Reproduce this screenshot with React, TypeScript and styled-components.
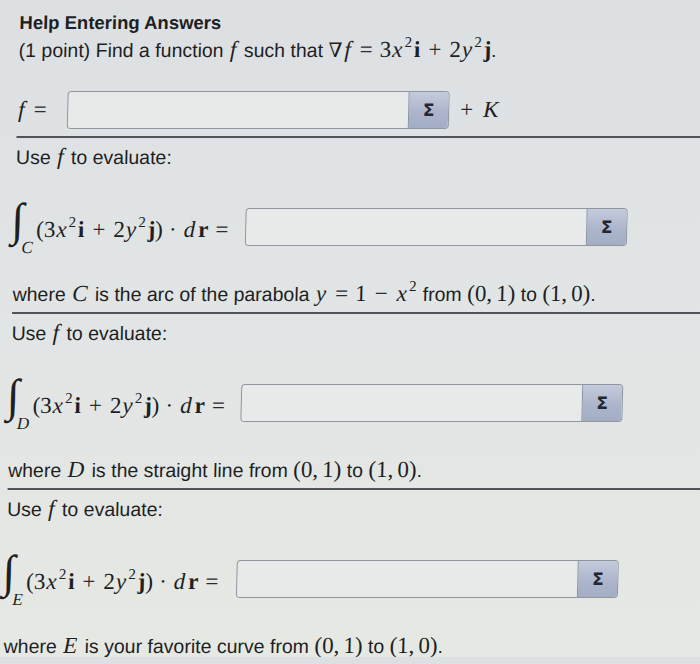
import { createGlobalStyle, styled } from "styled-components";

const GlobalStyle = createGlobalStyle`
  html, body {
    margin: 0;
    padding: 0;
    overflow: hidden;
  }
  body {
    background: linear-gradient(180deg, #dde0e3 0%, #e2e5e5 50%, #e6e8e3 100%);
    color: #1d1f23;
    font-family: "Liberation Sans", Arial, sans-serif;
  }
`;

type TCurve = {
  name: string;
  text: JSX.Element;
};

const getCurves = (): TCurve[] => [
  {
    name: "C",
    text: (
      <>
        is the arc of the parabola{" "}
        <Formula>
          <Var>y</Var>
          <Op $rel>=</Op>
          <Num>1</Num>
          <Op>−</Op>
          <Var>x</Var>
          <Sup>2</Sup>
        </Formula>{" "}
        from <Point a="0" b="1" /> to <Point a="1" b="0" />.
      </>
    ),
  },
  {
    name: "D",
    text: (
      <>
        is the straight line from <Point a="0" b="1" /> to <Point a="1" b="0" />.
      </>
    ),
  },
  {
    name: "E",
    text: (
      <>
        is your favorite curve from <Point a="0" b="1" /> to <Point a="1" b="0" />.
      </>
    ),
  },
];

function Point({ a, b }: { a: string; b: string }) {
  return (
    <Formula>
      (<Num>{a}</Num>,<Num $gap>{b}</Num>)
    </Formula>
  );
}

function Field() {
  return (
    <AnswerField>
      <FieldInput type="text" />
      <SigmaButton type="button">Σ</SigmaButton>
    </AnswerField>
  );
}

function Integrand({ name }: { name: string }) {
  return (
    <IntegralBox>
      <IntegralSign>∫</IntegralSign>
      <IntegralSub>{name}</IntegralSub>
      <IntegralBody>
        (<Num>3</Num>
        <Var>x</Var>
        <Sup>2</Sup>
        <Bold>i</Bold>
        <Op>+</Op>
        <Num>2</Num>
        <Var>y</Var>
        <Sup>2</Sup>
        <Bold>j</Bold>)<Op $dot>·</Op>
        <Var>d</Var>
        <Bold>r</Bold>
        <Op $rel>=</Op>
      </IntegralBody>
    </IntegralBox>
  );
}

export default function App() {
  return (
    <>
      <GlobalStyle />
      <Page>
        <Header>
          <Title>Help Entering Answers</Title>
          <Prompt>
            (1 point) Find a function <Var>f</Var> such that{" "}
            <Formula>
              <Nabla>∇</Nabla>
              <Var>f</Var>
              <Op $rel>=</Op>
              <Num>3</Num>
              <Var>x</Var>
              <Sup>2</Sup>
              <Bold>i</Bold>
              <Op>+</Op>
              <Num>2</Num>
              <Var>y</Var>
              <Sup>2</Sup>
              <Bold>j</Bold>
            </Formula>
            .
          </Prompt>
          <AnswerRow>
            <Label>
              <Var>f</Var>
              <Op $rel>=</Op>
            </Label>
            <Field />
            <Constant>
              <Op $lead>+</Op>
              <Var>K</Var>
            </Constant>
          </AnswerRow>
        </Header>
        {getCurves().map((c) => (
          <Section key={c.name}>
            <Rule />
            <Text>
              Use <Var>f</Var> to evaluate:
            </Text>
            <IntegralRow>
              <Integrand name={c.name} />
              <Field />
            </IntegralRow>
            <Text $where>
              where <Var>{c.name}</Var> {c.text}
            </Text>
          </Section>
        ))}
      </Page>
    </>
  );
}

const Page = styled.main`
  width: 760px;
  padding: 12px 0 0 20px;
  transform: skewX(-1.45deg);
  transform-origin: 0 0;
  font-size: 19.5px;
  line-height: 22px;
`;

const Header = styled.header`
  display: flex;
  flex-direction: column;
`;

const Title = styled.h1`
  margin: 0;
  font-size: 18.5px;
  font-weight: 700;
  line-height: 22px;
`;

const Prompt = styled.p`
  margin: 5px 0 0;
`;

const AnswerRow = styled.div`
  display: flex;
  align-items: center;
  margin-top: 30px;
`;

const Label = styled.div`
  width: 50px;
  white-space: nowrap;
`;

const Constant = styled.span`
  margin-left: 11px;
  font-family: "Liberation Serif", "DejaVu Serif", serif;
  font-size: 23px;
  white-space: nowrap;
`;

const Section = styled.section`
  display: flex;
  flex-direction: column;
  margin-top: 7px;
`;

const Rule = styled.hr`
  margin: 0 0 8px;
  border: none;
  height: 2px;
  background: #50545a;
`;

const Text = styled.p<{ $where?: boolean }>`
  margin: ${(p) => (p.$where ? "31px" : "0")} 0 0;
  white-space: nowrap;
`;

const IntegralRow = styled.div`
  display: grid;
  grid-template-columns: 216px auto;
  grid-template-rows: 50px;
  column-gap: 15px;
  align-items: center;
  justify-content: start;
  margin-top: 34px;
`;

const AnswerField = styled.div`
  display: flex;
  width: 382px;
  height: 38px;
  box-sizing: border-box;
  border: 1.5px solid #8f96a0;
  border-radius: 4px;
  background: #e8eaea;
  overflow: hidden;
`;

const FieldInput = styled.input`
  flex: 1;
  min-width: 0;
  border: none;
  background: transparent;
  outline: none;
`;

const SigmaButton = styled.button`
  width: 40px;
  padding: 0;
  border: none;
  border-left: 1.5px solid #8a93a6;
  background: linear-gradient(180deg, #c4cbdc 0%, #acb5cb 55%, #a3adc5 100%);
  color: #23262f;
  font-family: "DejaVu Sans", sans-serif;
  font-size: 17px;
  font-weight: 700;
`;

const Formula = styled.span`
  font-family: "Liberation Serif", "DejaVu Serif", serif;
  font-size: 23px;
  white-space: nowrap;
`;

const Var = styled.i`
  font-family: "Liberation Serif", "DejaVu Serif", serif;
  font-size: 23px;
  font-style: italic;
  padding: 0 2px 0 1px;
`;

const Num = styled.span<{ $gap?: boolean }>`
  margin-left: ${(p) => (p.$gap ? "4px" : "0")};
`;

const Bold = styled.b`
  font-weight: 700;
  padding-left: 1px;
`;

const Nabla = styled.span`
  font-family: "DejaVu Serif", serif;
  font-size: 20px;
  margin-right: 1px;
`;

const Op = styled.span<{ $lead?: boolean; $rel?: boolean; $dot?: boolean }>`
  display: inline-block;
  font-family: "Liberation Serif", "DejaVu Serif", serif;
  font-size: 23px;
  margin: 0
    ${(p) => (p.$lead ? "9px" : p.$rel ? "7px" : p.$dot ? "6px" : "8px")}
    0 ${(p) => (p.$lead ? "0" : p.$rel ? "7px" : p.$dot ? "6px" : "8px")};
  color: #2a2c30;
`;

const Sup = styled.sup`
  font-size: 15px;
  line-height: 0;
  vertical-align: 10px;
  padding-right: 1px;
`;

const IntegralBox = styled.div`
  display: flex;
  align-items: center;
  white-space: nowrap;
  font-family: "Liberation Serif", "DejaVu Serif", serif;
`;

const IntegralSign = styled.span`
  font-size: 46px;
  line-height: 50px;
  margin: 0 0 14px -3px;
`;

const IntegralSub = styled.i`
  align-self: flex-end;
  font-size: 17px;
  line-height: 18px;
  margin: 0 3px 2px -2px;
`;

const IntegralBody = styled.span`
  font-size: 23px;
  line-height: 26px;
  margin-top: 6px;
`;
